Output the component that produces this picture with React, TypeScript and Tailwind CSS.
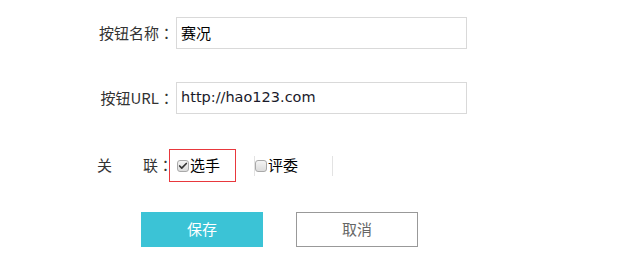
import { Check } from 'lucide-react';

function Box({ checked }: { checked: boolean }) {
  return (
    <span className="w-[12px] h-[12px] rounded-[3px] border border-[#a9a9a9] bg-gradient-to-b from-[#f4f4f4] to-[#dcdcdc] flex items-center justify-center flex-shrink-0">
      {checked && <Check className="w-[10px] h-[10px] text-[#333]" strokeWidth={4} />}
    </span>
  );
}

function Colon() {
  return <span className="font-['Noto_Sans_CJK_TC',sans-serif]">：</span>;
}

export default function App() {
  return (
    <div className="w-[629px] h-[272px] bg-white text-[15px] text-[#333] font-['Microsoft_YaHei','Noto_Sans_CJK_SC',sans-serif]">
      <div className="pt-[17px] flex flex-col">
        <div className="flex items-center h-[32px]">
          <span className="w-[174px] text-right">按钮名称<Colon /></span>
          <div className="ml-[2px] w-[291px] h-[32px] border border-[#d9d9d9] flex items-center px-[4px] text-[#000]">赛况</div>
        </div>
        <div className="flex items-center h-[32px] mt-[33px]">
          <span className="w-[174px] text-right">按钮URL<Colon /></span>
          <div className="ml-[2px] w-[291px] h-[32px] border border-[#d9d9d9] flex items-center px-[4px] text-[#1a1a2a] font-['DejaVu_Sans','Noto_Sans',sans-serif] text-[14.5px]">http://hao123.com</div>
        </div>
        <div className="flex items-center h-[33px] mt-[35px]">
          <span className="ml-[97px] w-[76px] flex justify-between">
            <span>关</span>
            <span>联<Colon /></span>
          </span>
          <label className="-ml-[4px] w-[67px] h-[33px] border border-[#e8383d] flex items-center pl-[7px] gap-[1px]">
            <Box checked />
            <span className="text-[#000]">选手</span>
          </label>
          <label className="ml-[18px] w-[79px] h-[20px] border-l border-r border-[#e3e3e3] flex items-center gap-[1px]">
            <Box checked={false} />
            <span className="text-[#000]">评委</span>
          </label>
        </div>
        <div className="flex mt-[30px]">
          <button className="ml-[141px] w-[122px] h-[35px] bg-[#3bc3d6] text-white text-[15px]">保存</button>
          <button className="ml-[33px] w-[122px] h-[35px] border border-[#999] text-[#666] text-[15px]">取消</button>
        </div>
      </div>
    </div>
  );
}
